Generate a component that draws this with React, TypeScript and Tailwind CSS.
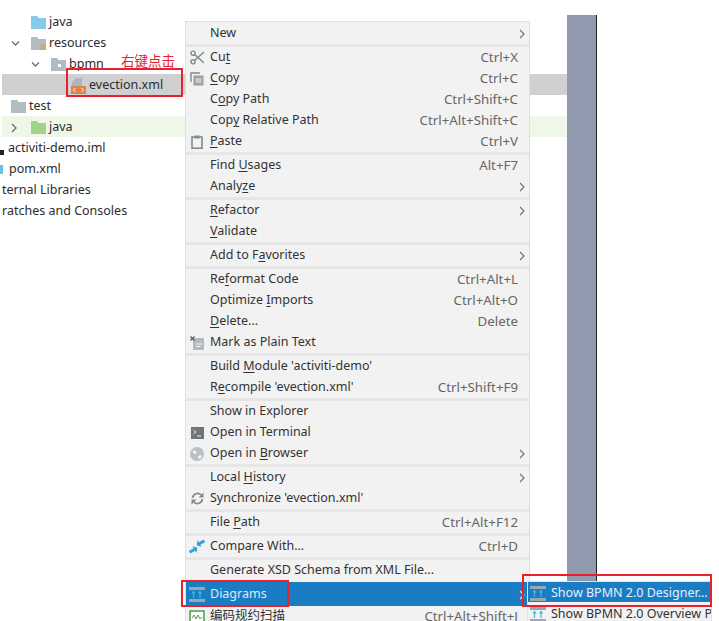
import React from "react";

const font = "font-['Noto_Sans','Noto_Sans_CJK_SC',sans-serif]";

interface itemI {
  label: string;
  mn?: number;
  keys?: string;
  sub?: boolean;
  icon?: string;
}

const groups: itemI[][] = [
  [{ label: "New", sub: true }],
  [
    { label: "Cut", mn: 2, keys: "Ctrl+X", icon: "cut" },
    { label: "Copy", mn: 0, keys: "Ctrl+C", icon: "copy" },
    { label: "Copy Path", mn: 1, keys: "Ctrl+Shift+C" },
    { label: "Copy Relative Path", mn: 3, keys: "Ctrl+Alt+Shift+C" },
    { label: "Paste", mn: 0, keys: "Ctrl+V", icon: "paste" },
  ],
  [
    { label: "Find Usages", mn: 5, keys: "Alt+F7" },
    { label: "Analyze", mn: 5, sub: true },
  ],
  [
    { label: "Refactor", mn: 0, sub: true },
    { label: "Validate", mn: 0 },
  ],
  [{ label: "Add to Favorites", mn: 8, sub: true }],
  [
    { label: "Reformat Code", mn: 2, keys: "Ctrl+Alt+L" },
    { label: "Optimize Imports", mn: 9, keys: "Ctrl+Alt+O" },
    { label: "Delete...", mn: 0, keys: "Delete" },
    { label: "Mark as Plain Text", icon: "plain" },
  ],
  [
    { label: "Build Module 'activiti-demo'", mn: 6 },
    { label: "Recompile 'evection.xml'", mn: 1, keys: "Ctrl+Shift+F9" },
  ],
  [
    { label: "Show in Explorer" },
    { label: "Open in Terminal", icon: "terminal" },
    { label: "Open in Browser", mn: 8, sub: true, icon: "globe" },
  ],
  [
    { label: "Local History", mn: 6, sub: true },
    { label: "Synchronize 'evection.xml'", icon: "sync" },
  ],
  [{ label: "File Path", mn: 5, keys: "Ctrl+Alt+F12" }],
  [{ label: "Compare With...", keys: "Ctrl+D", icon: "compare" }],
  [{ label: "Generate XSD Schema from XML File..." }],
];

function Mnemonic(props: { label: string; mn?: number }) {
  const { label, mn } = props;
  if (mn === undefined) return <span>{label}</span>;
  return (
    <span>
      {label.slice(0, mn)}
      <u className="underline-offset-2">{label[mn]}</u>
      {label.slice(mn + 1)}
    </span>
  );
}

function Arrow(props: { light?: boolean }) {
  return (
    <svg width="7" height="10" viewBox="0 0 7 10" className="ml-auto shrink-0">
      <path d="M1 1l4 4-4 4" fill="none" stroke={props.light ? "#d8e8f4" : "#6e6e6e"} strokeWidth="1.1" />
    </svg>
  );
}

function DiagramIcon() {
  return (
    <svg width="16" height="15" viewBox="0 0 16 15">
      <rect x="0" y="0" width="16" height="3" fill="#9aa7b0" />
      <rect x="0" y="12" width="16" height="3" fill="#9aa7b0" />
      <path d="M4.5 5v6M3 6.5l1.5-2 1.5 2M11 5v6M9.5 6.5l1.5-2 1.5 2" stroke="#40b6e0" strokeWidth="1.2" fill="none" />
    </svg>
  );
}

function MenuIcon(props: { name?: string }) {
  const n = props.name;
  if (n === "cut")
    return (
      <svg width="14" height="15" viewBox="0 0 14 15" fill="none" stroke="#7f8b91" strokeWidth="1.4">
        <circle cx="3" cy="3.2" r="2.1" />
        <circle cx="3" cy="11.8" r="2.1" />
        <path d="M4.6 4.6L14 13M4.6 10.4L14 2" />
      </svg>
    );
  if (n === "copy")
    return (
      <svg width="14" height="14" viewBox="0 0 14 14">
        <path d="M1 10V1h9" fill="none" stroke="#7f8b91" strokeWidth="1.4" />
        <rect x="3.5" y="3.5" width="10" height="10" fill="#9aa1a6" />
        <rect x="5.5" y="6" width="6" height="5" fill="#c8cbce" />
      </svg>
    );
  if (n === "paste")
    return (
      <svg width="12" height="14" viewBox="0 0 12 14" fill="none">
        <rect x="1" y="2" width="10" height="11.2" stroke="#7f8b91" strokeWidth="1.6" />
        <rect x="3.5" y="0.5" width="5" height="3" fill="#7f8b91" />
      </svg>
    );
  if (n === "plain")
    return (
      <svg width="14" height="14" viewBox="0 0 14 14">
        <rect x="3" y="2" width="11" height="12" fill="#b4bbc0" />
        <path d="M6 8h6M6 10.5h4" stroke="#f2f2f2" strokeWidth="1" />
        <path d="M0.5 0.5l4 4M4.5 0.5l-4 4" stroke="#555" strokeWidth="1.2" />
      </svg>
    );
  if (n === "terminal")
    return (
      <svg width="13" height="12" viewBox="0 0 13 12">
        <rect width="13" height="12" fill="#6e7478" />
        <path d="M2.5 3l2.5 2-2.5 2" fill="none" stroke="#f2f2f2" strokeWidth="1" />
        <path d="M6 9h4" stroke="#f2f2f2" strokeWidth="1" />
      </svg>
    );
  if (n === "globe")
    return (
      <svg width="14" height="14" viewBox="0 0 14 14">
        <circle cx="7" cy="7" r="7" fill="#b9bfc3" />
        <path d="M3 3l3 1 1 2-2 1-2-1zM8 9l3-1 1 1-2 3-2-1z" fill="#f2f2f2" />
      </svg>
    );
  if (n === "sync")
    return (
      <svg width="13" height="13" viewBox="0 0 13 13">
        <path d="M1.6 6a5 5 0 0 1 8.6-3" fill="none" stroke="#7f8b91" strokeWidth="1.8" />
        <path d="M11.4 7a5 5 0 0 1-8.6 3" fill="none" stroke="#7f8b91" strokeWidth="1.8" />
        <path d="M12.5 0.5v5h-5zM0.5 12.5v-5h5z" fill="#7f8b91" />
      </svg>
    );
  if (n === "compare")
    return (
      <svg width="16" height="15" viewBox="0 0 16 15">
        <path d="M0 9.5h5.5V7l3.5 4-3.5 4v-2.5H0z" fill="#389fd6" transform="rotate(-30 4.5 11)" />
        <path d="M16 5.5h-5.5V8L7 4l3.5-4v2.5H16z" fill="#389fd6" transform="rotate(-30 11.5 4)" />
      </svg>
    );
  return null;
}

function MenuRow(props: { item: itemI }) {
  const it = props.item;
  return (
    <div className="flex items-center h-[21px] pl-[2px] pr-[3px]">
      <span className="flex w-[22px] shrink-0 justify-center pr-[4px]">
        <MenuIcon name={it.icon} />
      </span>
      <Mnemonic label={it.label} mn={it.mn} />
      {it.keys && <span className="ml-auto pr-[8px] text-[13.3px] text-[#666]">{it.keys}</span>}
      {it.sub && <Arrow />}
    </div>
  );
}

function Chevron(props: { open?: boolean }) {
  return (
    <span className="flex w-[20px] shrink-0">
      {props.open ? (
        <svg width="9" height="9" viewBox="0 0 9 9">
          <path d="M1 2.5l3.5 3.5L8 2.5" fill="none" stroke="#6e6e6e" strokeWidth="1.3" />
        </svg>
      ) : (
        <svg width="7" height="10" viewBox="0 0 7 10">
          <path d="M1 1l4 4-4 4" fill="none" stroke="#6e6e6e" strokeWidth="1.3" />
        </svg>
      )}
    </span>
  );
}

function TreeRow(props: { label: string; indent: string; bg?: string; children?: React.ReactNode }) {
  return (
    <div className={`flex items-center h-[21px] pt-[2px] ${props.indent} ${props.bg ?? ""}`}>
      {props.children}
      <span className="ml-[3px]">{props.label}</span>
    </div>
  );
}

function Folder(props: { color: string; hole?: boolean; lines?: boolean }) {
  return (
    <svg width="15" height="13" viewBox="0 0 15 13">
      <path d="M0 0h6l1.5 2H15v11H0z" fill={props.color} />
      {props.hole && <rect x="7" y="6" width="3" height="3" fill="#fff" />}
      {props.lines && <path d="M9 8h6M9 10h6M9 12h6" stroke="#e0a040" strokeWidth="1" />}
    </svg>
  );
}

export default function App() {
  return (
    <div className={`relative w-[719px] h-[621px] overflow-hidden bg-white text-[12.5px] leading-none text-[#2b2b2b] ${font}`}>
      <div className="flex h-full">
        {/* project tree */}
        <div className="w-[567px] pt-[11px] pl-[2px]">
          <TreeRow label="java" indent="pl-[29px]">
            <Folder color="#87cbe8" />
          </TreeRow>
          <TreeRow label="resources" indent="pl-[9px]">
            <Chevron open />
            <Folder color="#b0bbc2" lines />
          </TreeRow>
          <TreeRow label="bpmn" indent="pl-[29px]">
            <Chevron open />
            <Folder color="#b0bbc2" hole />
          </TreeRow>
          <TreeRow label="evection.xml" indent="pl-[69px]" bg="bg-[#d0d0d0]">
            <svg width="15" height="16" viewBox="0 0 15 16">
              <path d="M5 0h6v8H1V4z" fill="#aeb5ba" />
              <rect x="0" y="8" width="15" height="8" fill="#e0824a" />
              <path d="M4.5 10l-2 2 2 2M10.5 10l2 2-2 2" fill="none" stroke="#fff" strokeWidth="1" />
            </svg>
          </TreeRow>
          <TreeRow label="test" indent="pl-[9px]">
            <Folder color="#b0bbc2" />
          </TreeRow>
          <TreeRow label="java" indent="pl-[9px]" bg="bg-[#eff8e8]">
            <Chevron />
            <Folder color="#a2d488" />
          </TreeRow>
          <div className="flex items-center h-[21px] pt-[2px] ml-[-2px]">
            <span className="mt-[7px] w-[4px] h-[5px] bg-[#222] mr-[4px]" />
            activiti-demo.iml
          </div>
          <div className="flex items-center h-[21px] pt-[2px] ml-[-2px]">
            <span className="w-[3px] h-[9px] bg-[#6cc0e8] mr-[6px]" />
            pom.xml
          </div>
          <div className="flex items-center h-[21px] pt-[2px]">ternal Libraries</div>
          <div className="flex items-center h-[21px] pt-[2px]">ratches and Consoles</div>
        </div>
        {/* editor edge */}
        <div className="mt-[15px] w-[30px] bg-[#9099ae] border-r border-[#222]" />
      </div>

      {/* context menu */}
      <div className="absolute left-[185px] top-[21px] w-[345px] pt-[1px] border border-[#e0e0e0] bg-[#f2f2f2] text-[#333]">
        {groups.map((g, i) => (
          <div key={i} className={i > 0 ? "border-t-[3px] border-[#e6e6e6]" : ""}>
            {g.map((it) => (
              <MenuRow key={it.label} item={it} />
            ))}
          </div>
        ))}
        <div className="flex items-center h-[24px] mt-[1px] pt-[1px] pl-[3px] pr-[3px] bg-[#1a7dc4] text-[#dfeaf4]">
          <span className="flex w-[21px] shrink-0">
            <DiagramIcon />
          </span>
          Diagrams
          <Arrow light />
        </div>
        <div className="flex items-center h-[21px] pl-[3px] pr-[11px]">
          <svg width="16" height="14" viewBox="0 0 16 14" className="mr-[5px] shrink-0">
            <rect x="1" y="1" width="14" height="12" fill="#fff" stroke="#4fa64a" strokeWidth="1.6" />
            <path d="M3 8l2-3 2 4 2-4 2 4 2-2" fill="none" stroke="#4fa64a" strokeWidth="1" />
          </svg>
          <span>编码规约扫描</span>
          <span className="ml-auto text-[13.3px] text-[#666]">Ctrl+Alt+Shift+J</span>
        </div>
      </div>

      {/* submenu */}
      <div className="absolute left-[527px] top-[581px] w-[185px] h-[60px] border border-[#e0e0e0] bg-[#f2f2f2] text-[#333]">
        <div className="flex items-center h-[20px] pt-[2px] pl-[2px] bg-[#1a7dc4] text-[#e6f0f8]">
          <span className="flex w-[21px] shrink-0">
            <DiagramIcon />
          </span>
          Show BPMN 2.0 Designer...
        </div>
        <div className="flex items-center h-[21px] mt-[2px] pl-[2px] whitespace-nowrap overflow-hidden">
          <span className="flex w-[21px] shrink-0">
            <DiagramIcon />
          </span>
          Show BPMN 2.0 Overview Page
        </div>
      </div>

      {/* annotations */}
      <div className="absolute left-[66px] top-[68px] w-[117px] h-[29px] border-2 border-[#e8212f]" />
      <div className="absolute left-[121px] top-[54px] text-[13.5px] text-[#e8212f] font-['Noto_Sans_CJK_SC',serif]">右键点击</div>
      <div className="absolute left-[181px] top-[580px] w-[108px] h-[27px] border-2 border-[#e8212f]" />
      <div className="absolute left-[522px] top-[574px] w-[190px] h-[33px] border-2 border-[#e8212f]" />
    </div>
  );
}
